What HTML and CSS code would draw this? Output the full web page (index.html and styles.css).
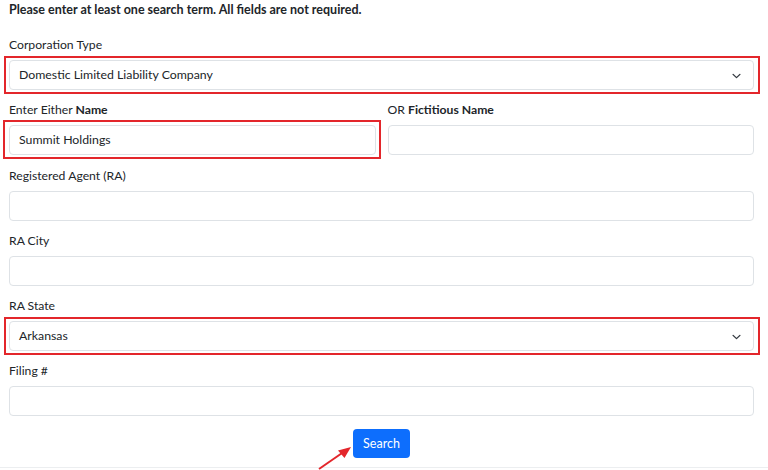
FILE: index.html
```html
<!DOCTYPE html>
<html>
<head>
<meta charset="utf-8">
<link rel="stylesheet" href="styles.css">
</head>
<body>
<div class="page">
  <form class="form">
    <p class="intro">Please enter at least one search term. All fields are not required.</p>

    <div class="group">
      <label class="label">Corporation Type</label>
      <div class="control select highlight">Domestic Limited Liability Company
        <svg class="chev" viewBox="0 0 10 6" width="9" height="6"><path d="M1.2 1.2l3.8 3.6 3.8-3.6" fill="none" stroke="#343a40" stroke-width="1.5" stroke-linecap="round" stroke-linejoin="round"/></svg>
      </div>
    </div>

    <div class="row">
      <div class="group">
        <label class="label">Enter Either <b>Name</b></label>
        <div class="control highlight wide">Summit Holdings</div>
      </div>
      <div class="group">
        <label class="label">OR <b>Fictitious Name</b></label>
        <div class="control"></div>
      </div>
    </div>

    <div class="group">
      <label class="label">Registered Agent (RA)</label>
      <div class="control"></div>
    </div>

    <div class="group">
      <label class="label">RA City</label>
      <div class="control"></div>
    </div>

    <div class="group">
      <label class="label">RA State</label>
      <div class="control select highlight">Arkansas
        <svg class="chev" viewBox="0 0 10 6" width="9" height="6"><path d="M1.2 1.2l3.8 3.6 3.8-3.6" fill="none" stroke="#343a40" stroke-width="1.5" stroke-linecap="round" stroke-linejoin="round"/></svg>
      </div>
    </div>

    <div class="group">
      <label class="label">Filing #</label>
      <div class="control"></div>
    </div>

    <div class="actions">
      <span class="btn">Search</span>
      <svg class="arrow" width="40" height="30" viewBox="0 0 40 30"><line x1="4" y1="28" x2="30" y2="10" stroke="#e3262b" stroke-width="2"/><path d="M36 6 L23 9.5 L29.5 17 Z" fill="#e3262b"/></svg>
    </div>
  </form>
  <div class="rule"></div>
</div>
</body>
</html>
```

FILE: styles.css
```css
html, body {
  margin: 0;
  padding: 0;
  background: #fff;
}
body {
  font-family: Lato, "Liberation Sans", sans-serif;
  font-size: 12px;
  color: #212529;
}
.page {
  width: 768px;
  height: 470px;
  overflow: hidden;
}
.form {
  padding: 1px 14px 0 9px;
}
.intro {
  margin: 0 0 17px 0;
  font-weight: 700;
  font-size: 12.5px;
  line-height: 18px;
}
.group {
  margin-bottom: 11.3px;
}
.label {
  display: block;
  font-size: 12.2px;
  line-height: 18px;
  margin-bottom: 6px;
}
.label b {
  font-weight: 700;
}
.control {
  position: relative;
  box-sizing: border-box;
  height: 30px;
  border: 1px solid #dee2e6;
  border-radius: 4px;
  padding: 0 9px;
  line-height: 28px;
  font-size: 12.3px;
  background: #fff;
}
.select .chev {
  position: absolute;
  right: 12px;
  top: 12px;
}
.highlight::after {
  content: "";
  position: absolute;
  left: -6px;
  right: -7px;
  top: -5px;
  bottom: -5px;
  border: 2px solid #e3262b;
  pointer-events: none;
}
.highlight.wide::after {
  left: -7px;
  right: -6px;
  top: -6px;
  bottom: -5px;
}
.row {
  display: grid;
  grid-template-columns: 1fr 1fr;
  column-gap: 12px;
}
.actions {
  position: relative;
  display: flex;
  justify-content: center;
  padding-top: 1px;
}
.btn {
  display: inline-block;
  background: #0d6efd;
  color: #fff;
  border-radius: 4px;
  height: 29px;
  line-height: 29px;
  padding: 0 10px;
  font-size: 12.5px;
}
.arrow {
  position: absolute;
  left: 306px;
  top: 13px;
}
.rule {
  margin-top: 9px;
  border-top: 1px solid #eceef0;
}
```
